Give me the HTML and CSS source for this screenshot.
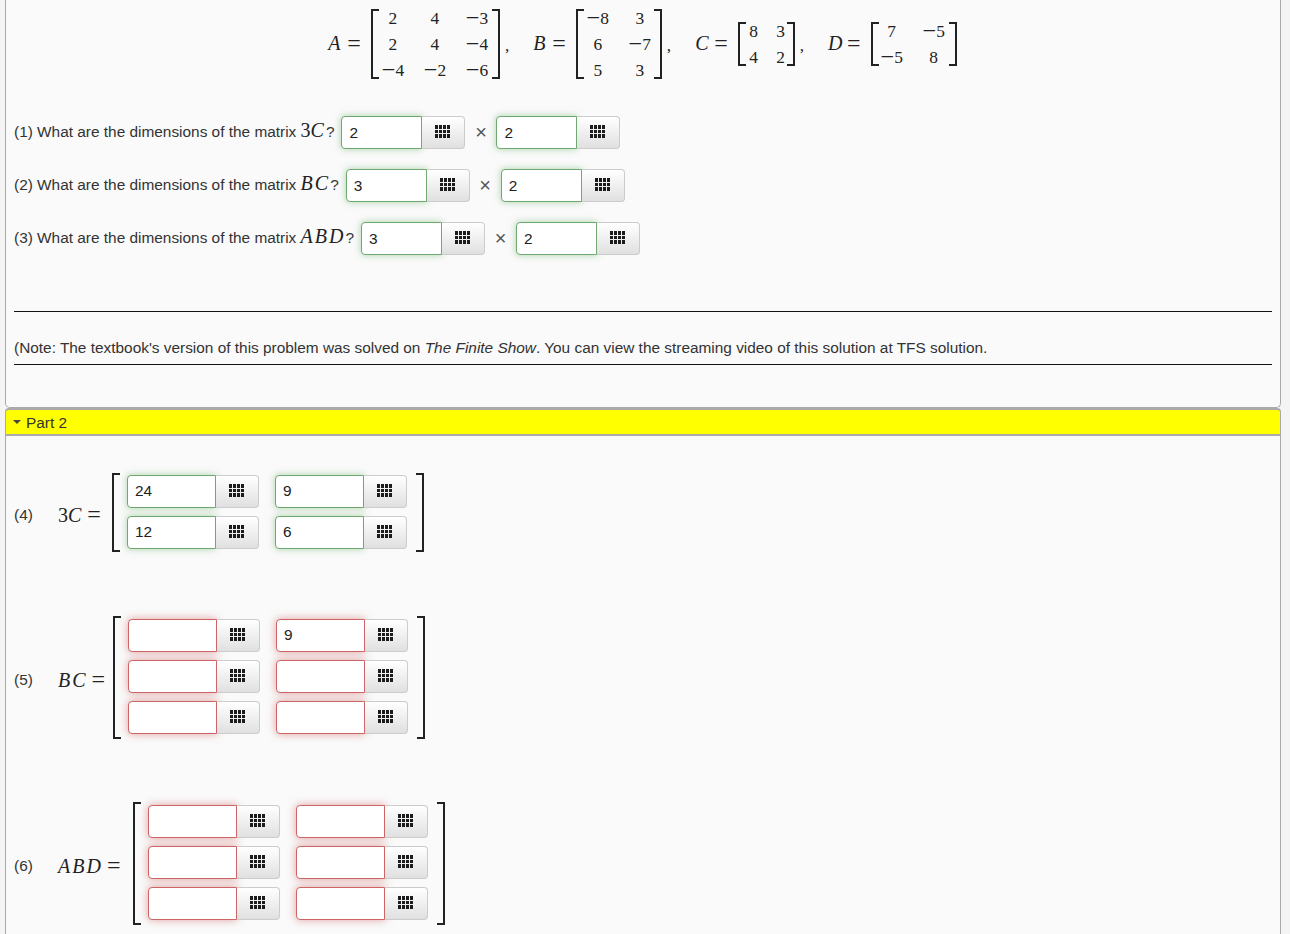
FILE: index.html
```html
<!DOCTYPE html>
<html lang="en">
<head>
<meta charset="utf-8">
<title>Matrix dimensions</title>
<link rel="stylesheet" href="styles.css">
</head>
<body>
<svg class="defs" width="0" height="0" aria-hidden="true">
  <symbol id="grid" viewBox="0 0 15 13">
    <path d="M0 0h3v4H0zM4 0h3v4H4zM8 0h3v4H8zM12 0h3v4h-3zM0 5h3v3H0zM4 5h3v3H4zM8 5h3v3H8zM12 5h3v3h-3zM0 9h3v4H0zM4 9h3v4H4zM8 9h3v4H8zM12 9h3v4h-3z"/>
  </symbol>
</svg>
<main class="accordion">
  <section class="panel panel-one">
    <div class="givens">
      <span class="name">A</span><span class="eq">=</span>
      <div class="matrix cols3">
        <span>2</span><span>4</span><span><i class="mn">−</i>3</span>
        <span>2</span><span>4</span><span><i class="mn">−</i>4</span>
        <span><i class="mn">−</i>4</span><span><i class="mn">−</i>2</span><span><i class="mn">−</i>6</span>
      </div>
      <span class="comma">,</span>
      <span class="name">B</span><span class="eq">=</span>
      <div class="matrix cols2 wide">
        <span><i class="mn">−</i>8</span><span>3</span>
        <span>6</span><span><i class="mn">−</i>7</span>
        <span>5</span><span>3</span>
      </div>
      <span class="comma">,</span>
      <span class="name">C</span><span class="eq">=</span>
      <div class="matrix small">
        <span>8</span><span>3</span>
        <span>4</span><span>2</span>
      </div>
      <span class="comma">,</span>
      <span class="name">D</span><span class="eq">=</span>
      <div class="matrix cols2 shrt">
        <span>7</span><span><i class="mn">−</i>5</span>
        <span><i class="mn">−</i>5</span><span>8</span>
      </div>
    </div>

    <div class="question">
      <span>(1) What are the dimensions of the matrix <span class="tex">3<em>C</em></span>?</span>
      <div class="group ok"><div class="field">2</div><div class="btn"><svg class="ico"><use href="#grid"/></svg></div></div>
      <span class="times">×</span>
      <div class="group ok"><div class="field">2</div><div class="btn"><svg class="ico"><use href="#grid"/></svg></div></div>
    </div>
    <div class="question">
      <span>(2) What are the dimensions of the matrix <span class="tex"><em>BC</em></span>?</span>
      <div class="group ok"><div class="field">3</div><div class="btn"><svg class="ico"><use href="#grid"/></svg></div></div>
      <span class="times">×</span>
      <div class="group ok"><div class="field">2</div><div class="btn"><svg class="ico"><use href="#grid"/></svg></div></div>
    </div>
    <div class="question">
      <span>(3) What are the dimensions of the matrix <span class="tex"><em>ABD</em></span>?</span>
      <div class="group ok"><div class="field">3</div><div class="btn"><svg class="ico"><use href="#grid"/></svg></div></div>
      <span class="times">×</span>
      <div class="group ok"><div class="field">2</div><div class="btn"><svg class="ico"><use href="#grid"/></svg></div></div>
    </div>

    <div class="note">(Note: The textbook's version of this problem was solved on <em>The Finite Show</em>. You can view the streaming video of this solution at TFS solution.</div>
  </section>

  <header class="part-head"><span class="caret"></span>Part 2</header>

  <section class="panel panel-two">
    <div class="answer a4">
      <span class="num">(4)</span>
      <span class="tex lhs">3<em>C</em><span class="eq2">=</span></span>
      <div class="imatrix">
        <div class="group ok"><div class="field">24</div><div class="btn"><svg class="ico"><use href="#grid"/></svg></div></div>
        <div class="group ok"><div class="field">9</div><div class="btn"><svg class="ico"><use href="#grid"/></svg></div></div>
        <div class="group ok"><div class="field">12</div><div class="btn"><svg class="ico"><use href="#grid"/></svg></div></div>
        <div class="group ok"><div class="field">6</div><div class="btn"><svg class="ico"><use href="#grid"/></svg></div></div>
      </div>
    </div>
    <div class="answer a5">
      <span class="num">(5)</span>
      <span class="tex lhs"><em>BC</em><span class="eq2">=</span></span>
      <div class="imatrix">
        <div class="group bad"><div class="field"></div><div class="btn"><svg class="ico"><use href="#grid"/></svg></div></div>
        <div class="group bad"><div class="field">9</div><div class="btn"><svg class="ico"><use href="#grid"/></svg></div></div>
        <div class="group bad"><div class="field"></div><div class="btn"><svg class="ico"><use href="#grid"/></svg></div></div>
        <div class="group bad"><div class="field"></div><div class="btn"><svg class="ico"><use href="#grid"/></svg></div></div>
        <div class="group bad"><div class="field"></div><div class="btn"><svg class="ico"><use href="#grid"/></svg></div></div>
        <div class="group bad"><div class="field"></div><div class="btn"><svg class="ico"><use href="#grid"/></svg></div></div>
      </div>
    </div>
    <div class="answer a6">
      <span class="num">(6)</span>
      <span class="tex lhs"><em>ABD</em><span class="eq2">=</span></span>
      <div class="imatrix">
        <div class="group bad"><div class="field"></div><div class="btn"><svg class="ico"><use href="#grid"/></svg></div></div>
        <div class="group bad"><div class="field"></div><div class="btn"><svg class="ico"><use href="#grid"/></svg></div></div>
        <div class="group bad"><div class="field"></div><div class="btn"><svg class="ico"><use href="#grid"/></svg></div></div>
        <div class="group bad"><div class="field"></div><div class="btn"><svg class="ico"><use href="#grid"/></svg></div></div>
        <div class="group bad"><div class="field"></div><div class="btn"><svg class="ico"><use href="#grid"/></svg></div></div>
        <div class="group bad"><div class="field"></div><div class="btn"><svg class="ico"><use href="#grid"/></svg></div></div>
      </div>
    </div>
  </section>
</main>
</body>
</html>
```
FILE: styles.css
```css
* { box-sizing: border-box; }
html, body { height: 934px; overflow: hidden; }
body {
  margin: 0;
  background: #f4f4f4;
  font-family: "Liberation Sans", Arial, sans-serif;
  font-size: 15.4px;
  color: #333;
}
.defs { position: absolute; }
.accordion { margin: 0 9px 0 5px; }

.panel {
  background: #fafafa;
  border: 1px solid #aaa;
  border-top: 0;
  padding: 0 8px;
}
.panel-one { height: 408px; border-radius: 0 0 5px 5px; padding-top: 9px; }
.panel-two { height: 520px; border-bottom: 0; padding-top: 37px; }

.part-head {
  height: 28px;
  background: #ff0;
  border: 1px solid #aaa;
  border-width: 2px 1px;
  border-radius: 4px 4px 0 0;
  display: flex;
  align-items: center;
  gap: 5px;
  padding: 1px 0 0 7px;
  color: #333;
}
.caret {
  width: 0;
  height: 0;
  margin-top: -2px;
  border: 4px solid transparent;
  border-top: 4px solid #444;
  border-bottom: 0;
}

/* Given matrices */
.givens {
  display: flex;
  justify-content: center;
  align-items: center;
  height: 70px;
  font-family: "Liberation Serif", "Times New Roman", serif;
  font-size: 17.4px;
  color: #222;
}
.name { font-style: italic; font-size: 20px; width: 14px; margin: -2px 0 0 24px; }
.givens .name:first-child { margin-left: -1px; }
.eq { font-size: 24px; margin: -2px 10px 0 5px; line-height: 1; }
.comma { margin: 3px 0 0 5px; }

.matrix {
  display: grid;
  grid-auto-rows: 26px;
  align-items: center;
  justify-items: center;
  align-content: center;
  column-gap: 18px;
  padding: 0 11px 0 10px;
  height: 70px;
  position: relative;
}
.matrix::before, .matrix::after, .imatrix::before, .imatrix::after {
  content: "";
  position: absolute;
  top: 0;
  bottom: 0;
  width: 6px;
  border: 2px solid #222;
}
.matrix::before, .imatrix::before { left: 0; border-right: 0; }
.matrix::after, .imatrix::after { right: 0; border-left: 0; }
.cols3 { grid-template-columns: repeat(3, 24px); }
.cols2 { grid-template-columns: repeat(2, 24px); }
.wide { padding: 0 10px; }
.shrt { height: 44px; padding: 0 11px 0 9px; }
.small { height: 44px; column-gap: 11px; padding: 0 6px 0 8px; grid-template-columns: repeat(2, 16px); }
.mn { font-style: normal; font-size: 1.4em; line-height: 0; vertical-align: -2px; }

/* Questions */
.question {
  display: flex;
  align-items: center;
  height: 33px;
  margin-top: 37px;
  line-height: 33px;
}
.question + .question { margin-top: 20px; }
.question > span:first-child { margin-right: 7px; margin-top: -3px; }
.tex {
  font-family: "Liberation Serif", "Times New Roman", serif;
  font-size: 20px;
  color: #222;
}
.tex em { font-style: italic; letter-spacing: 2px; }
.times {
  width: 31px;
  text-align: center;
  font-size: 20px;
  color: #555;
}

.group { display: flex; height: 33px; width: 124px; }
.field {
  flex: 1;
  background: #fff;
  border: 1px solid #6fa96f;
  border-radius: 4px 0 0 4px;
  padding-left: 7px;
  line-height: 31px;
  color: #222;
}
.ok .field { box-shadow: 0 0 7px rgba(90, 170, 90, .5); }
.bad .field { border-color: #cc6666; box-shadow: 0 0 8px rgba(200, 70, 70, .5); }
.btn {
  width: 43px;
  border: 1px solid #ccc;
  border-left: 0;
  border-radius: 0 4px 4px 0;
  padding-right: 1px;
  background: linear-gradient(#fff, #e0e0e0);
  display: flex;
  align-items: center;
  justify-content: center;
}
.ico { width: 15px; height: 13px; fill: #1c1c1c; margin-top: -2px; }

/* Note */
.note {
  margin-top: 56px;
  height: 54px;
  border-top: 1px solid #111;
  border-bottom: 1px solid #111;
  padding-top: 27px;
  line-height: 18px;
}

/* Answer matrices */
.answer { display: flex; align-items: center; }
.num { width: 44px; flex: none; padding-top: 4px; }
.lhs { flex: none; white-space: nowrap; padding-top: 4px; }
.eq2 { font-size: 24px; line-height: 1; margin-left: 4px; letter-spacing: 0; }
.imatrix {
  display: grid;
  grid-template-columns: 132px 132px;
  column-gap: 16px;
  row-gap: 8px;
  padding: 2px 17px 3px 15px;
  position: relative;
}
.imatrix .field { line-height: 29px; }
.a4 .lhs { width: 54px; }
.a5 { margin-top: 64px; }
.a5 .lhs { width: 55px; }
.a5 .imatrix, .a6 .imatrix { padding-top: 3px; padding-bottom: 5px; }
.a6 { margin-top: 63px; }
.a6 .lhs { width: 75px; }
.imatrix .group { width: 132px; }
```
